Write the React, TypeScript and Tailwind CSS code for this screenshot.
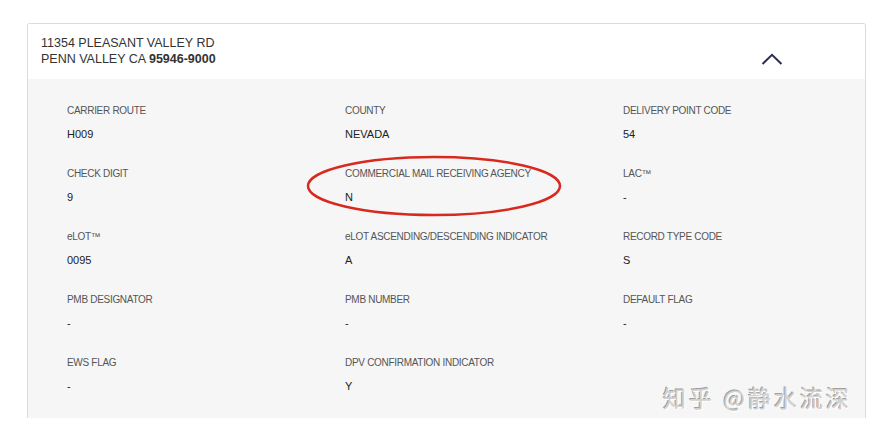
import React from "react";

const FIELDS = [
  { label: "CARRIER ROUTE", value: "H009" },
  { label: "COUNTY", value: "NEVADA" },
  { label: "DELIVERY POINT CODE", value: "54" },
  { label: "CHECK DIGIT", value: "9" },
  { label: "COMMERCIAL MAIL RECEIVING AGENCY", value: "N" },
  { label: "LAC™", value: "-" },
  { label: "eLOT™", value: "0095" },
  { label: "eLOT ASCENDING/DESCENDING INDICATOR", value: "A" },
  { label: "RECORD TYPE CODE", value: "S" },
  { label: "PMB DESIGNATOR", value: "-" },
  { label: "PMB NUMBER", value: "-" },
  { label: "DEFAULT FLAG", value: "-" },
  { label: "EWS FLAG", value: "-" },
  { label: "DPV CONFIRMATION INDICATOR", value: "Y" },
];

export default function App() {
  return (
    <div
      className="relative w-[873px] h-[432px] overflow-hidden bg-white pt-[23px] pl-[27px] pr-[7px]"
      style={{ fontFamily: '"Liberation Sans", Arial, sans-serif' }}
    >
      <div className="border border-b-0 border-[#dcdcdc] rounded-t-[3px] overflow-hidden">
        {/* header */}
        <div className="bg-white h-[55px] flex justify-between pl-[13px] pr-[82px] pt-[11px]">
          <div className="text-[12.5px] leading-[16px] text-[#333]">
            <p>11354 PLEASANT VALLEY RD</p>
            <p>
              PENN VALLEY CA <span className="font-bold">95946-9000</span>
            </p>
          </div>
          <svg width="22" height="12" viewBox="0 0 22 12" className="mt-[18px]">
            <path d="M1.5 11 L11 1.8 L20.5 11" fill="none" stroke="#2c2c54" strokeWidth="2" />
          </svg>
        </div>

        {/* details */}
        <div className="bg-[#f6f6f6] h-[339px] pl-[39px] pt-[26px] grid grid-cols-[278px_278px_1fr] gap-y-[28px] content-start">
          {FIELDS.map((f) => (
            <div key={f.label}>
              <p className="text-[10px] leading-[12px] tracking-[-0.3px] text-[#555]">{f.label}</p>
              <p className="mt-[11px] text-[11px] leading-[12px] text-[#222]">{f.value}</p>
            </div>
          ))}
        </div>
      </div>

      {/* red annotation */}
      <svg className="absolute left-[305px] top-[154px]" width="260" height="64" viewBox="0 0 260 64">
        <ellipse cx="129" cy="32" rx="126" ry="29" fill="none" stroke="#d8291f" strokeWidth="2.5" />
      </svg>

      {/* watermark */}
      <div
        className="absolute left-[663px] top-[383px] text-[23px] leading-[28px] tracking-[3px] text-[#d0d0d0]"
        style={{
          fontFamily: '"Noto Sans CJK SC", sans-serif',
          textShadow: "1px 1px 0 #ffffff, -1px -1px 0 #a0a0a0",
        }}
      >
        知乎 @静水流深
      </div>
    </div>
  );
}
